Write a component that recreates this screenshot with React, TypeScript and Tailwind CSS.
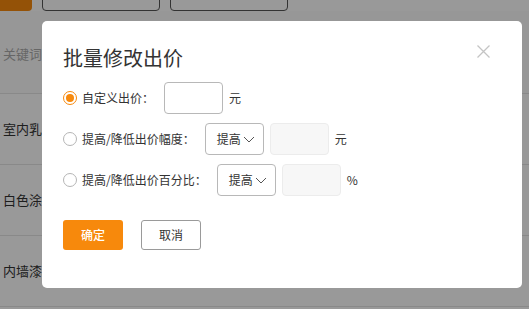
import React from "react";

const font = { fontFamily: '"Noto Sans CJK SC", "Noto Sans", sans-serif' };

function Radio({ checked }: { checked?: boolean }) {
  return (
    <span
      className={
        "flex h-[14px] w-[14px] shrink-0 items-center justify-center rounded-full border bg-white " +
        (checked ? "border-[#f7890c]" : "border-[#b5b5b5]")
      }
    >
      {checked && <span className="block h-[8px] w-[8px] rounded-full bg-[#f7890c]" />}
    </span>
  );
}

function Select() {
  return (
    <div className="ml-[10px] flex h-[32px] w-[59px] shrink-0 items-center rounded-[4px] border border-[#b8b8b8] pl-[11px] text-[12px] text-[#333]">
      <span>提高</span>
      <svg className="ml-[2px]" width="12" height="7" viewBox="0 0 12 7" fill="none">
        <path d="M1 1l5 5 5-5" stroke="#555" strokeWidth="1" />
      </svg>
    </div>
  );
}

function GrayInput() {
  return <div className="ml-[6px] h-[32px] w-[59px] shrink-0 rounded-[4px] border border-[#ececec] bg-[#f7f7f7]" />;
}

export default function App() {
  return (
    <div className="relative h-[309px] w-[529px] overflow-hidden bg-white" style={font}>
      {/* background page */}
      <div className="flex h-[11px] items-end gap-[10px] overflow-hidden">
        <div className="ml-[-20px] h-[30px] w-[52px] shrink-0 rounded-[4px] bg-[#f7890c]" />
        <div className="h-[30px] w-[118px] shrink-0 rounded-[4px] border border-[#555]" />
        <div className="h-[30px] w-[118px] shrink-0 rounded-[4px] border border-[#555]" />
      </div>
      <div className="h-[83px] border-b border-[#e4e4e4] bg-[#fcfcfc] pl-[3px] pt-[33px] text-[13px] text-[#aaa]">关键词</div>
      <div className="flex h-[71px] items-center border-b border-[#e4e4e4] pl-[3px] text-[13px] text-[#333]">室内乳胶漆</div>
      <div className="flex h-[71px] items-center border-b border-[#e4e4e4] pl-[3px] text-[13px] text-[#333]">白色涂料</div>
      <div className="flex h-[71px] items-center border-b border-[#e4e4e4] pl-[3px] text-[13px] text-[#333]">
        <span className="w-[300px]">内墙漆</span>
        <span className="mt-[6px] h-[26px] w-[28px] rounded-[10px] border-2 border-[#b58ad0]" />
      </div>

      {/* overlay */}
      <div className="absolute inset-0 bg-black/40" />

      {/* modal */}
      <div className="absolute left-[42px] top-[21px] h-[267px] w-[480px] rounded-[5px] bg-white pl-[21px] pt-[23px]">
        <svg className="absolute right-[32px] top-[24px]" width="13" height="13" viewBox="0 0 13 13">
          <path d="M0.5 0.5l12 12M12.5 0.5l-12 12" stroke="#c4c4c4" strokeWidth="1.3" />
        </svg>
        <div className="text-[20px] leading-[28px] text-[#333]">批量修改出价</div>

        <div className="mt-[10px] flex flex-col gap-[9px] text-[12px] text-[#333]">
          <div className="flex h-[32px] items-center">
            <Radio checked />
            <span className="ml-[5px]">自定义出价：</span>
            <div className="ml-[10px] h-[32px] w-[59px] shrink-0 rounded-[4px] border border-[#b8b8b8]" />
            <span className="ml-[6px]">元</span>
          </div>
          <div className="flex h-[32px] items-center">
            <Radio />
            <span className="ml-[5px]">提高/降低出价幅度：</span>
            <Select />
            <GrayInput />
            <span className="ml-[6px]">元</span>
          </div>
          <div className="flex h-[32px] items-center">
            <Radio />
            <span className="ml-[5px]">提高/降低出价百分比：</span>
            <Select />
            <GrayInput />
            <span className="ml-[6px]">%</span>
          </div>
        </div>

        <div className="mt-[24px] flex gap-[18px]">
          <button className="flex h-[30px] w-[60px] items-center justify-center rounded-[3px] bg-[#f7890c] text-[12px] font-medium text-white">
            确定
          </button>
          <button className="flex h-[30px] w-[60px] items-center justify-center rounded-[3px] border border-[#9a9a9a] bg-white text-[12px] text-[#333]">
            取消
          </button>
        </div>
      </div>
    </div>
  );
}
